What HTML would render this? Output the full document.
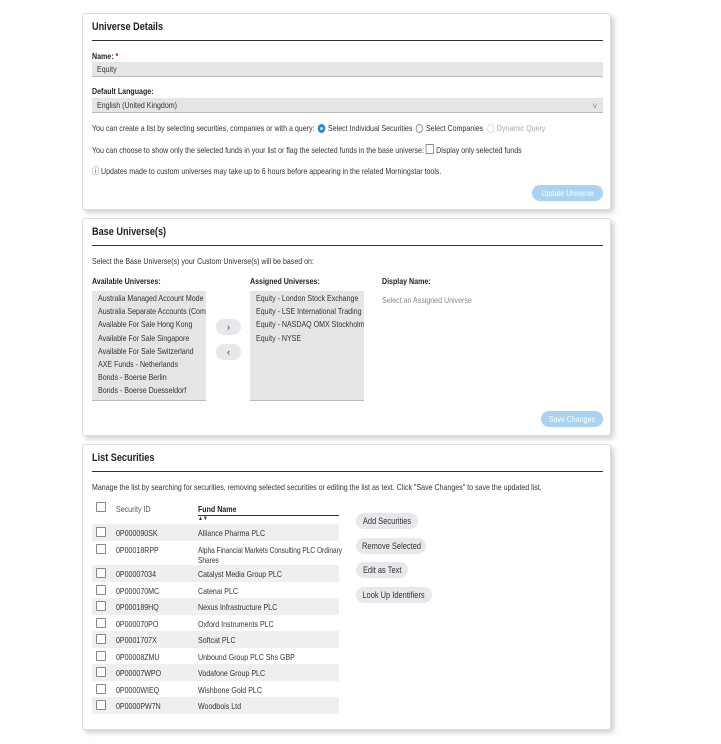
<!DOCTYPE html>
<html><head><meta charset="utf-8"><style>
*{box-sizing:border-box;margin:0;padding:0}
body{width:721px;height:744px;background:#fff;font-family:"Liberation Sans",sans-serif;font-size:8.5px;color:#333;position:relative;overflow:hidden}
.p{position:absolute;left:82px;width:529px;background:#fff;border:1px solid #ddd;border-radius:3px;box-shadow:3px 3px 5px rgba(0,0,0,.18)}
.a{position:absolute;white-space:nowrap;transform:scaleX(.83);transform-origin:0 0;margin-top:-1px}
.t{font-weight:bold;font-size:11px;color:#222}
.rule{position:absolute;left:9px;width:511px;height:1px;background:#333}
.b{font-weight:bold;color:#222}
.in{position:absolute;left:9px;width:511px;height:15px;background:#e5e5e5;border-bottom:1px solid #bbb;padding:2px 5px}
.in span.s{display:inline-block;transform:scaleX(.83);transform-origin:0 0}
.btnb{position:absolute;background:#a9d3f0;color:#fff;border-radius:9px;text-align:center;line-height:16px;height:16px}
.btng{position:absolute;background:#e8e8ec;border-radius:9px;text-align:center;line-height:16px;height:16px;color:#333;font-size:9px;white-space:nowrap}
.sc{display:inline-block;transform:scaleX(.83)}
.lb{position:absolute;background:#e5e5e5;border-bottom:1px solid #bbb;overflow:hidden;padding:1px 6px;line-height:13.2px;white-space:nowrap}
.lb div{transform:scaleX(.83);transform-origin:0 0;width:140px;overflow:hidden}
.rad{display:inline-block;width:9px;height:9px;border:1px solid #888;border-radius:50%;vertical-align:-2px;margin:0 3px 0 2px}
.cb{position:absolute;width:10px;height:10px;border:1px solid #888;border-radius:1px;background:#fff}
.row{position:absolute;left:9px;width:247px}
.g{background:#efefef}
</style></head><body>

<div class="p" style="top:13px;height:197px">
<div class="a t" style="left:9px;top:8px">Universe Details</div>
<div class="rule" style="top:26px"></div>
<div class="a b" style="left:9px;top:38px">Name: <span style="color:#c00">*</span></div>
<div class="in" style="top:48px"><span class="s">Equity</span></div>
<div class="a b" style="left:9px;top:73px">Default Language:</div>
<div class="in" style="top:84px"><span class="s">English (United Kingdom)</span><span style="position:absolute;right:6px;color:#888">v</span></div>
<div class="a" style="left:9px;top:110px">You can create a list by selecting securities, companies or with a query: <span class="rad" style="border:3px solid #1d87d8;background:#fff"></span>Select Individual Securities <span class="rad"></span>Select Companies <span class="rad" style="border-color:#ddd"></span><span style="color:#aaa">Dynamic Query</span></div>
<div class="a" style="left:9px;top:131px">You can choose to show only the selected funds in your list or flag the selected funds in the base universe: <span style="display:inline-block;width:10px;height:10px;border:1px solid #888;vertical-align:-1px"></span> Display only selected funds</div>
<div class="a" style="left:9px;top:152px">ⓘ Updates made to custom universes may take up to 6 hours before appearing in the related Morningstar tools.</div>
<div class="btnb" style="left:449px;top:171px;width:71px"><span class="sc">Update Universe</span></div>
</div>

<div class="p" style="top:218px;height:218px">
<div class="a t" style="left:9px;top:8px">Base Universe(s)</div>
<div class="rule" style="top:26px"></div>
<div class="a" style="left:9px;top:38px">Select the Base Universe(s) your Custom Universe(s) will be based on:</div>
<div class="a b" style="left:9px;top:58px">Available Universes:</div>
<div class="a b" style="left:167px;top:58px">Assigned Universes:</div>
<div class="a b" style="left:299px;top:58px">Display Name:</div>
<div class="lb" style="left:9px;top:72px;width:114px;height:110px"><div>Australia Managed Account Mode<br>Australia Separate Accounts (Com<br>Available For Sale Hong Kong<br>Available For Sale Singapore<br>Available For Sale Switzerland<br>AXE Funds - Netherlands<br>Bonds - Boerse Berlin<br>Bonds - Boerse Duesseldorf<br>Bonds - Boerse S</div></div>
<div class="btng" style="left:133px;top:100px;width:25px">›</div>
<div class="btng" style="left:133px;top:125px;width:25px">‹</div>
<div class="lb" style="left:167px;top:72px;width:114px;height:110px"><div style="width:131px">Equity - London Stock Exchange<br>Equity - LSE International Trading S<br>Equity - NASDAQ OMX Stockholm<br>Equity - NYSE</div></div>
<div class="a" style="left:299px;top:77px;color:#888">Select an Assigned Universe</div>
<div class="btnb" style="left:458px;top:192px;width:62px"><span class="sc">Save Changes</span></div>
</div>

<div class="p" style="top:444px;height:286px">
<div class="a t" style="left:9px;top:8px">List Securities</div>
<div class="rule" style="top:26px"></div>
<div class="a" style="left:9px;top:38px">Manage the list by searching for securities, removing selected securities or editing the list as text. Click "Save Changes" to save the updated list.</div>
<div class="cb" style="left:13px;top:57px"></div>
<div class="a" style="left:33px;top:60px;color:#555">Security ID</div>
<div class="a b" style="left:115px;top:60px">Fund Name</div>
<div style="position:absolute;left:115px;top:70px;width:141px;height:1px;background:#333"></div>
<div class="a" style="left:115px;top:72px;font-size:6px">▲▼</div>

<div class="row g" style="top:79px;height:17px"></div>
<div class="row g" style="top:120px;height:17px"></div>
<div class="row g" style="top:153px;height:17px"></div>
<div class="row g" style="top:186px;height:17px"></div>
<div class="row g" style="top:219px;height:17px"></div>
<div class="row g" style="top:252px;height:17px"></div>

<div class="cb" style="left:13px;top:82px"></div><div class="a" style="left:33px;top:84px">0P000090SK</div><div class="a" style="left:115px;top:84px">Alliance Pharma PLC</div>
<div class="cb" style="left:13px;top:99px"></div><div class="a" style="left:33px;top:101px">0P00018RPP</div><div class="a" style="left:115px;top:101px;line-height:10px;transform:scaleX(.77)">Alpha Financial Markets Consulting PLC Ordinary<br>Shares</div>
<div class="cb" style="left:13px;top:123px"></div><div class="a" style="left:33px;top:125px">0P00007034</div><div class="a" style="left:115px;top:125px">Catalyst Media Group PLC</div>
<div class="cb" style="left:13px;top:140px"></div><div class="a" style="left:33px;top:142px">0P000070MC</div><div class="a" style="left:115px;top:142px">Catenai PLC</div>
<div class="cb" style="left:13px;top:156px"></div><div class="a" style="left:33px;top:158px">0P000189HQ</div><div class="a" style="left:115px;top:158px">Nexus Infrastructure PLC</div>
<div class="cb" style="left:13px;top:173px"></div><div class="a" style="left:33px;top:175px">0P000070PO</div><div class="a" style="left:115px;top:175px">Oxford Instruments PLC</div>
<div class="cb" style="left:13px;top:189px"></div><div class="a" style="left:33px;top:191px">0P0001707X</div><div class="a" style="left:115px;top:191px">Softcat PLC</div>
<div class="cb" style="left:13px;top:206px"></div><div class="a" style="left:33px;top:208px">0P00008ZMU</div><div class="a" style="left:115px;top:208px">Unbound Group PLC Shs GBP</div>
<div class="cb" style="left:13px;top:222px"></div><div class="a" style="left:33px;top:224px">0P00007WPO</div><div class="a" style="left:115px;top:224px">Vodafone Group PLC</div>
<div class="cb" style="left:13px;top:239px"></div><div class="a" style="left:33px;top:241px">0P0000WIEQ</div><div class="a" style="left:115px;top:241px">Wishbone Gold PLC</div>
<div class="cb" style="left:13px;top:255px"></div><div class="a" style="left:33px;top:257px">0P0000PW7N</div><div class="a" style="left:115px;top:257px">Woodbois Ltd</div>

<div class="btng" style="left:273px;top:68px;width:62px"><span class="sc">Add Securities</span></div>
<div class="btng" style="left:273px;top:93px;width:70px"><span class="sc">Remove Selected</span></div>
<div class="btng" style="left:273px;top:117px;width:52px"><span class="sc">Edit as Text</span></div>
<div class="btng" style="left:273px;top:142px;width:76px"><span class="sc">Look Up Identifiers</span></div>
</div>
</body></html>
